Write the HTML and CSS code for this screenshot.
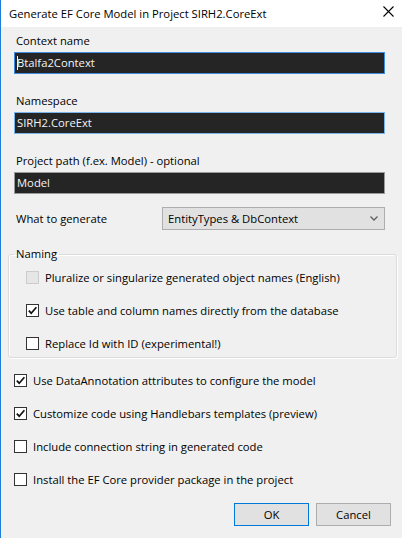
FILE: index.html
```html
<!DOCTYPE html>
<html>
<head>
<meta charset="utf-8">
<link rel="stylesheet" href="styles.css">
</head>
<body>
<div class="window">
  <div class="titlebar">
    <span class="title">Generate EF Core Model in Project SIRH2.CoreExt</span>
    <svg class="close" width="11" height="11" viewBox="0 0 11 11"><path d="M0.5 0.5 L10.5 10.5 M10.5 0.5 L0.5 10.5" stroke="#000" stroke-width="1.1" fill="none"/></svg>
  </div>
  <div class="content">
    <div class="field">
      <div class="label">Context name</div>
      <div class="textbox focused"><span class="caret"></span>Btalfa2Context</div>
    </div>
    <div class="field">
      <div class="label">Namespace</div>
      <div class="textbox hover">SIRH2.CoreExt</div>
    </div>
    <div class="field">
      <div class="label">Project path (f.ex. Model) - optional</div>
      <div class="textbox">Model</div>
    </div>
    <div class="combo-row">
      <span class="combo-label">What to generate</span>
      <div class="combo">
        <span>EntityTypes &amp; DbContext</span>
        <svg class="chev" width="8" height="5" viewBox="0 0 8 5"><path d="M0.5 0.5 L4 4 L7.5 0.5" stroke="#606060" stroke-width="1.3" fill="none"/></svg>
      </div>
    </div>
    <fieldset class="group">
      <legend>Naming</legend>
      <div class="check disabled"><span class="box"></span><span>Pluralize or singularize generated object names (English)</span></div>
      <div class="check"><span class="box"><svg width="11" height="11" viewBox="0 0 11 11"><path d="M1.8 5.6 L4.2 8.2 L9.4 2.2" stroke="#111" stroke-width="1.7" fill="none"/></svg></span><span>Use table and column names directly from the database</span></div>
      <div class="check"><span class="box"></span><span>Replace Id with ID (experimental!)</span></div>
    </fieldset>
    <div class="options">
      <div class="check"><span class="box"><svg width="11" height="11" viewBox="0 0 11 11"><path d="M1.8 5.6 L4.2 8.2 L9.4 2.2" stroke="#111" stroke-width="1.7" fill="none"/></svg></span><span>Use DataAnnotation attributes to configure the model</span></div>
      <div class="check"><span class="box"><svg width="11" height="11" viewBox="0 0 11 11"><path d="M1.8 5.6 L4.2 8.2 L9.4 2.2" stroke="#111" stroke-width="1.7" fill="none"/></svg></span><span>Customize code using Handlebars templates (preview)</span></div>
      <div class="check"><span class="box"></span><span>Include connection string in generated code</span></div>
      <div class="check"><span class="box"></span><span>Install the EF Core provider package in the project</span></div>
    </div>
    <div class="buttons">
      <div class="btn default">OK</div>
      <div class="btn">Cancel</div>
    </div>
  </div>
</div>
</body>
</html>
```

FILE: styles.css
```css
html, body {
  margin: 0;
  padding: 0;
}
body {
  width: 402px;
  height: 538px;
  overflow: hidden;
  background: #f0f0f0;
  font-family: "Open Sans", "Noto Sans", sans-serif;
  font-size: 11.25px;
  color: #000;
}
.window {
  height: 538px;
  border-left: 1px solid #1c7ed6;
  box-sizing: border-box;
  display: flex;
  flex-direction: column;
}
.titlebar {
  height: 27px;
  background: #fff;
  display: flex;
  align-items: center;
  padding-left: 8px;
  flex-shrink: 0;
}
.title {
  font-size: 11.25px;
  flex: 1;
}
.close {
  margin-right: 8px;
  margin-top: -4px;
}
.content {
  padding: 6px 17px 0 13px;
  display: flex;
  flex-direction: column;
}
.field {
  display: flex;
  flex-direction: column;
  margin-bottom: 19px;
}
.label {
  line-height: 16px;
  margin-left: 2px;
  margin-bottom: 3px;
}
.textbox {
  height: 22px;
  box-sizing: border-box;
  background: #252526;
  border: 1px solid #9a9a9a;
  color: #f4f4f4;
  padding-left: 2px;
  line-height: 20px;
  display: flex;
  align-items: center;
}
.textbox.focused {
  border-color: #3d8ee0;
}
.textbox.hover {
  border-color: #7ab2ea;
}
.caret {
  width: 1px;
  height: 14px;
  background: #f4f4f4;
  margin-right: -1px;
}
.combo-row {
  display: flex;
  align-items: center;
  margin-top: -6px;
}
.combo-label {
  margin-left: 2px;
  width: 146px;
}
.combo {
  flex: 1;
  height: 23px;
  box-sizing: border-box;
  background: #e1e1e1;
  border: 1px solid #adadad;
  display: flex;
  align-items: center;
  padding-left: 5px;
  padding-right: 6px;
}
.combo span {
  flex: 1;
}
.group {
  margin: 16px -12px 0 -6px;
  border: 1px solid #dcdcdc;
  box-shadow: inset 1px 1px 0 #fff, 1px 1px 0 #fff;
  border-radius: 3px;
  padding: 7px 0 6px 7px;
  display: flex;
  flex-direction: column;
  gap: 17px;
}
.group legend {
  padding: 0 2px;
  margin-left: -2px;
  line-height: 16px;
}
.check {
  display: flex;
  align-items: center;
  height: 16px;
  gap: 6px;
}
.group .check {
  margin-left: 10px;
}
.box {
  width: 13px;
  height: 13px;
  box-sizing: border-box;
  border: 1px solid #333;
  background: #fff;
  display: flex;
  align-items: center;
  justify-content: center;
  flex-shrink: 0;
}
.check.disabled .box {
  border-color: #cccccc;
  background: #e6e6e6;
}
.options {
  margin-top: 14px;
  display: flex;
  flex-direction: column;
  gap: 17px;
}
.options .check {
  margin-left: 0;
}
.buttons {
  margin-top: 16px;
  margin-right: -6px;
  display: flex;
  justify-content: flex-end;
  gap: 7px;
}
.btn {
  width: 75px;
  height: 23px;
  box-sizing: border-box;
  background: #e1e1e1;
  border: 1px solid #adadad;
  display: flex;
  align-items: center;
  justify-content: center;
}
.btn.default {
  border-color: #0078d7;
}
```
